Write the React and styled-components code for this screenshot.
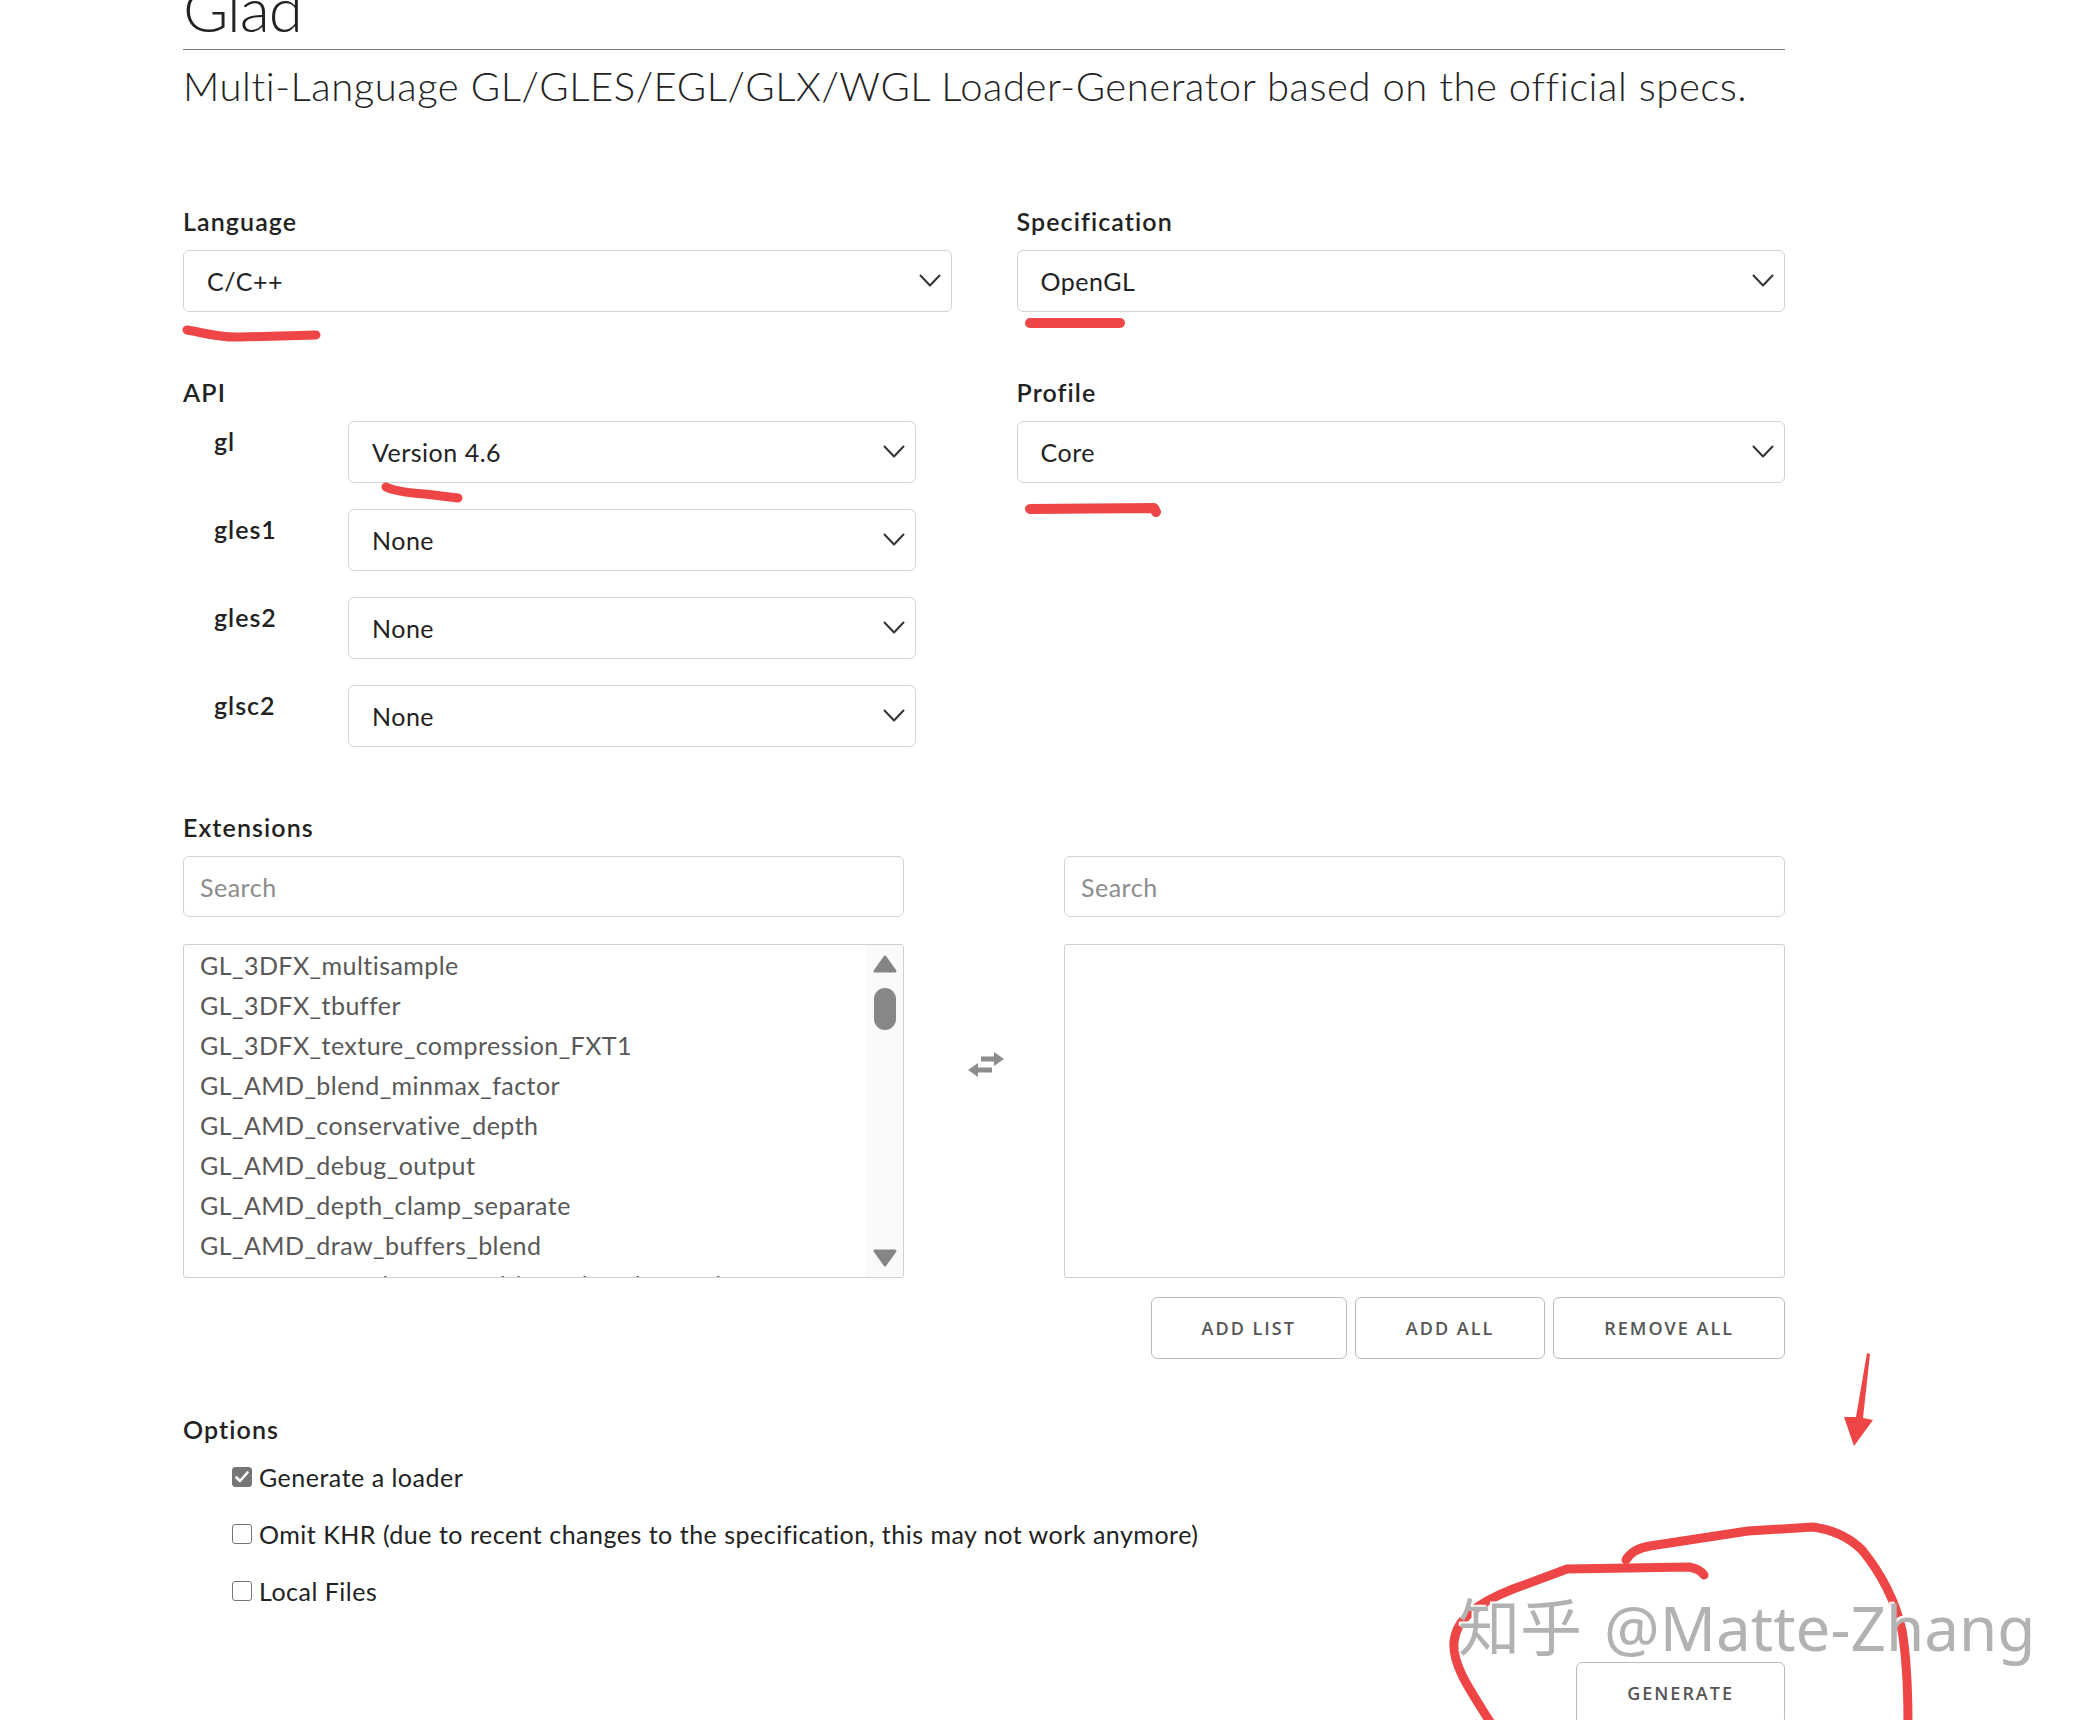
import React from 'react';
import styled, { createGlobalStyle } from 'styled-components';

const SUB = 'Multi-Language GL/GLES/EGL/GLX/WGL Loader-Generator based on the official specs.';
const OMIT = 'Omit KHR (due to recent changes to the specification, this may not work anymore)';

const GlobalStyle = createGlobalStyle`
  html, body { margin: 0; padding: 0; background: #fff; overflow: hidden; }
  body { font-family: Lato, "Noto Sans", sans-serif; color: #222; }
  * { box-sizing: border-box; }
`;

const Page = styled.div`
  position: relative;
  width: 2078px;
  height: 1720px;
  overflow: hidden;
  background: #fff;
`;

const Container = styled.main`
  width: 1602px;
  margin-left: 183px;
  display: flex;
  flex-direction: column;
`;

const Title = styled.h1`
  margin: -23px 0 0;
  font-size: 62px;
  font-weight: 300;
  line-height: 62px;
  letter-spacing: -1px;
  color: #222;
`;

const Rule = styled.hr`
  margin: 10px 0 0;
  border: 0;
  border-top: 1px solid #7a7a7a;
  height: 0;
`;

const Subtitle = styled.h4`
  margin: 12px 0 0;
  font-size: 40px;
  font-weight: 300;
  line-height: 48px;
  letter-spacing: 0.55px;
  color: #222;
`;

const TwoCol = styled.div`
  display: grid;
  grid-template-columns: 1fr 1fr;
  column-gap: 65px;
  margin-top: ${(p) => p.$top}px;
`;

const Field = styled.div`
  display: flex;
  flex-direction: column;
`;

const Label = styled.label`
  font-size: 25px;
  font-weight: 600;
  line-height: 40px;
  letter-spacing: 1.1px;
  margin-bottom: 9px;
  color: #222;
`;

const SelectBox = styled.div`
  height: 62px;
  width: ${(p) => (p.$width ? `${p.$width}px` : '100%')};
  border: 1px solid #d3d3d3;
  border-radius: 6px;
  background: #fff;
  display: flex;
  align-items: center;
  justify-content: space-between;
  padding: 0 10px 0 23px;
  font-size: 25px;
  letter-spacing: 0.5px;
  color: #222;
`;

const ApiList = styled.div`
  display: flex;
  flex-direction: column;
  gap: 26px;
  padding-left: 31px;
`;

const ApiRow = styled.div`
  display: flex;
  align-items: flex-start;
`;

const ApiName = styled.span`
  width: 134px;
  font-size: 25px;
  font-weight: 600;
  line-height: 40px;
  letter-spacing: 1px;
`;

const ExtGrid = styled.div`
  display: grid;
  grid-template-columns: 721px 160px 721px;
  margin-top: 60px;
`;

const FullLabel = styled(Label)`
  grid-column: 1 / -1;
`;

const SearchInput = styled.input`
  height: 61px;
  width: 100%;
  border: 1px solid #d3d3d3;
  border-radius: 6px;
  padding: 0 16px;
  font-family: Lato, sans-serif;
  font-size: 25px;
  letter-spacing: 0.5px;
  color: #222;
  outline: none;
  grid-column: ${(p) => p.$col};
  &::placeholder { color: #8c8c8c; }
`;

const ListBox = styled.div`
  grid-column: ${(p) => p.$col};
  margin-top: 27px;
  height: 334px;
  border: 1px solid #d0d0d0;
  border-radius: 3px;
  display: flex;
  overflow: hidden;
`;

const Items = styled.ul`
  flex: 1;
  margin: 0;
  padding: 0 0 0 16px;
  list-style: none;
  overflow: hidden;
`;

const Item = styled.li`
  font-size: 25px;
  line-height: 40px;
  letter-spacing: 0.45px;
  color: #585858;
  white-space: nowrap;
`;

const ScrollTrack = styled.div`
  width: 37px;
  background: #fafafa;
  display: flex;
  flex-direction: column;
  align-items: center;
  padding: 10px 0 10px;
`;

const Thumb = styled.div`
  width: 22px;
  height: 42px;
  border-radius: 11px;
  background: #878787;
  margin-top: 15px;
`;

const Spacer = styled.div`
  flex: 1;
`;

const SwapCell = styled.div`
  grid-column: 2;
  margin-top: 27px;
  display: flex;
  justify-content: center;
  padding-top: 107px;
  padding-left: 4px;
`;

const ButtonRow = styled.div`
  grid-column: 3;
  margin-top: 19px;
  display: flex;
  justify-content: flex-end;
  gap: 8px;
`;

const Button = styled.button`
  height: 62px;
  padding: 0 50px;
  border: 1px solid #bbb;
  border-radius: 6px;
  background: transparent;
  font-family: "Open Sans", sans-serif;
  font-size: 18px;
  font-weight: 600;
  letter-spacing: 2px;
  color: #555;
  text-transform: uppercase;
  white-space: nowrap;
`;

const OptionsSection = styled.section`
  margin-top: 50px;
  display: flex;
  flex-direction: column;
`;

const CheckList = styled.div`
  display: flex;
  flex-direction: column;
  gap: 17px;
  margin-top: -1px;
  padding-left: 49px;
`;

const CheckRow = styled.label`
  display: flex;
  align-items: center;
  gap: 7px;
  font-size: 25px;
  line-height: 40px;
  letter-spacing: 0.5px;
  color: #222;
`;

const Box = styled.span`
  width: 20px;
  height: 20px;
  border-radius: 3px;
  border: 1.5px solid #767676;
  background: ${(p) => (p.$checked ? '#767676' : '#fff')};
  display: flex;
  align-items: center;
  justify-content: center;
`;

const GenerateRow = styled.div`
  display: flex;
  justify-content: flex-end;
  margin-top: 51px;
`;

const Overlay = styled.svg`
  position: absolute;
  left: 0;
  top: 0;
  pointer-events: none;
`;

const Watermark = styled.div`
  position: absolute;
  left: 1458px;
  top: 1596px;
  display: flex;
  gap: 22px;
  font-family: "Noto Sans", "Noto Sans CJK SC", sans-serif;
  font-size: 62px;
  line-height: 62px;
  white-space: nowrap;
  color: #b2b2b2;
  text-shadow: -2px -2px 0 rgba(255, 255, 255, 0.95);
  pointer-events: none;
`;

const Chevron = () => (
  <svg width="22" height="14" viewBox="0 0 22 14">
    <path d="M1.5 1.5 L11 11.5 L20.5 1.5" fill="none" stroke="#333" strokeWidth="2" strokeLinecap="round" strokeLinejoin="round" />
  </svg>
);

const Select = ({ value, width }) => (
  <SelectBox $width={width}>
    <span>{value}</span>
    <Chevron />
  </SelectBox>
);

const TriUp = () => (
  <svg width="24" height="18" viewBox="0 0 24 18">
    <path d="M12 2 L22 16 L2 16 Z" fill="#858585" stroke="#858585" strokeWidth="3" strokeLinejoin="round" />
  </svg>
);
const TriDown = () => (
  <svg width="24" height="18" viewBox="0 0 24 18">
    <path d="M2 2 L22 2 L12 16 Z" fill="#858585" stroke="#858585" strokeWidth="3" strokeLinejoin="round" />
  </svg>
);

const SwapIcon = () => (
  <svg width="37" height="28" viewBox="0 0 37 28">
    <g fill="#8c8c8c">
      <rect x="13" y="5.5" width="15" height="5" />
      <polygon points="26,1 36,8 26,15" />
      <rect x="8" y="16.5" width="16" height="5" />
      <polygon points="10,12 0,19 10,26" />
    </g>
  </svg>
);

const Check = () => (
  <svg width="14" height="12" viewBox="0 0 14 12">
    <path d="M1.5 6.5 L5 10 L12.5 1.5" fill="none" stroke="#fff" strokeWidth="2.6" strokeLinecap="round" strokeLinejoin="round" />
  </svg>
);

const EXTS = [
  'GL_3DFX_multisample',
  'GL_3DFX_tbuffer',
  'GL_3DFX_texture_compression_FXT1',
  'GL_AMD_blend_minmax_factor',
  'GL_AMD_conservative_depth',
  'GL_AMD_debug_output',
  'GL_AMD_depth_clamp_separate',
  'GL_AMD_draw_buffers_blend',
  'GL_AMD_framebuffer_multisample_advanced',
];

const RED = '#ee4646';

export default function App() {
  return (
    <Page>
      <GlobalStyle />
      <Container>
        <Title>Glad</Title>
        <Rule />
        <Subtitle>{SUB}</Subtitle>

        <TwoCol $top={91}>
          <Field>
            <Label>Language</Label>
            <Select value="C/C++" />
          </Field>
          <Field>
            <Label>Specification</Label>
            <Select value="OpenGL" />
          </Field>
        </TwoCol>

        <TwoCol $top={60}>
          <Field>
            <Label>API</Label>
            <ApiList>
              {[
                ['gl', 'Version 4.6'],
                ['gles1', 'None'],
                ['gles2', 'None'],
                ['glsc2', 'None'],
              ].map(([n, v]) => (
                <ApiRow key={n}>
                  <ApiName>{n}</ApiName>
                  <Select value={v} width={568} />
                </ApiRow>
              ))}
            </ApiList>
          </Field>
          <Field>
            <Label>Profile</Label>
            <Select value="Core" />
          </Field>
        </TwoCol>

        <ExtGrid>
          <FullLabel>Extensions</FullLabel>
          <SearchInput $col={1} placeholder="Search" />
          <SearchInput $col={3} placeholder="Search" />
          <ListBox $col={1}>
            <Items>
              {EXTS.map((e) => (
                <Item key={e}>{e}</Item>
              ))}
            </Items>
            <ScrollTrack>
              <TriUp />
              <Thumb />
              <Spacer />
              <TriDown />
            </ScrollTrack>
          </ListBox>
          <SwapCell>
            <div><SwapIcon /></div>
          </SwapCell>
          <ListBox $col={3} />
          <ButtonRow>
            <Button>Add list</Button>
            <Button>Add all</Button>
            <Button>Remove all</Button>
          </ButtonRow>
        </ExtGrid>

        <OptionsSection>
          <Label>Options</Label>
          <CheckList>
            <CheckRow>
              <Box $checked><Check /></Box>
              Generate a loader
            </CheckRow>
            <CheckRow>
              <Box />
              {OMIT}
            </CheckRow>
            <CheckRow>
              <Box />
              Local Files
            </CheckRow>
          </CheckList>
        </OptionsSection>

        <GenerateRow>
          <Button>Generate</Button>
        </GenerateRow>
      </Container>

      <Overlay width="2078" height="1720" viewBox="0 0 2078 1720">
        <g fill="none" stroke={RED} strokeLinecap="round" strokeLinejoin="round">
          <path d="M187 330 C 205 333, 220 338, 240 337 L 316 335" strokeWidth="9" />
          <path d="M1030 323 L 1120 323" strokeWidth="10" />
          <path d="M386 487 Q 396 492, 425 494 L 458 498" strokeWidth="9" />
          <path d="M1030 509 L 1154 508 L 1156 512" strokeWidth="10" />
          <path d="M1492 1725 C1470 1690 1452 1665 1454 1642 C1456 1620 1475 1604 1513 1589 L1567 1569 L1689 1567 Q1700 1569 1704 1575" strokeWidth="9" />
          <path d="M1626 1560 Q1632 1549 1650 1546 L1748 1531 L1813 1527 C1835 1530 1850 1538 1862 1550 C1880 1572 1895 1600 1902 1630 C1907 1660 1908 1690 1908 1725" strokeWidth="9" />
        </g>
        <polygon points="1867,1353 1870,1354 1863,1418 1873,1420 1854,1446 1844,1417 1856,1417" fill={RED} />
      </Overlay>

      <Watermark>
        <span>知乎</span>
        <span>@Matte-Zhang</span>
      </Watermark>
    </Page>
  );
}
